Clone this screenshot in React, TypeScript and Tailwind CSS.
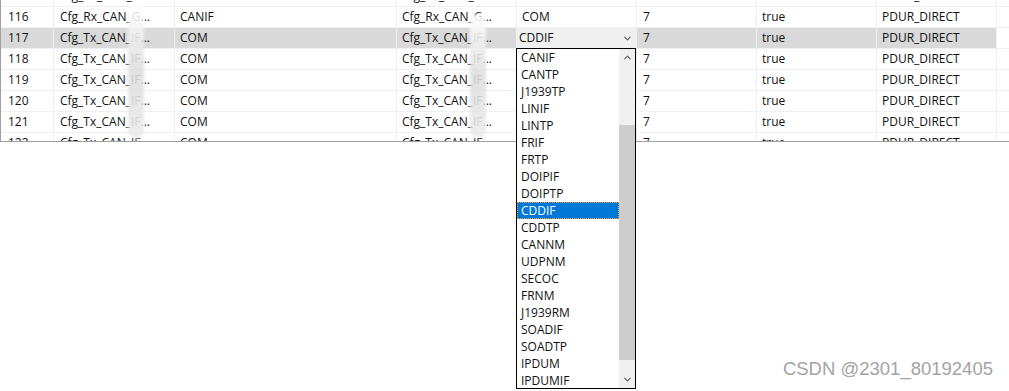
import { ChevronDown, ChevronUp } from 'lucide-react';

type Row = {
  id: string;
  name: string;
  module: string;
  path: string;
  target: string;
  hi?: boolean;
  combo?: boolean;
};

const rx = 'Cfg_Rx_CAN_G...';
const tx = 'Cfg_Tx_CAN_IF...';

// rows 118+ have their target cell hidden under the open list
const rows: Row[] = [
  { id: '115', name: rx, module: 'CANIF', path: rx, target: 'COM' },
  { id: '116', name: rx, module: 'CANIF', path: rx, target: 'COM' },
  { id: '117', name: tx, module: 'COM', path: tx, target: 'CDDIF', hi: true, combo: true },
  { id: '118', name: tx, module: 'COM', path: tx, target: '' },
  { id: '119', name: tx, module: 'COM', path: tx, target: '' },
  { id: '120', name: tx, module: 'COM', path: tx, target: '' },
  { id: '121', name: tx, module: 'COM', path: tx, target: '' },
  { id: '122', name: tx, module: 'COM', path: tx, target: '' },
];

const options = [
  'CANIF', 'CANTP', 'J1939TP', 'LINIF', 'LINTP', 'FRIF', 'FRTP', 'DOIPIF', 'DOIPTP', 'CDDIF',
  'CDDTP', 'CANNM', 'UDPNM', 'SECOC', 'FRNM', 'J1939RM', 'SOADIF', 'SOADTP', 'IPDUM', 'IPDUMIF',
];

function Cell({ w, children, pad = 'pl-[6px]' }: { w: string; children?: React.ReactNode; pad?: string }) {
  return (
    <div className={`${w} ${pad} flex h-full items-center overflow-hidden whitespace-nowrap border-r border-[#eef0f3]`}>
      {children}
    </div>
  );
}

export default function App() {
  return (
    <div className="relative h-[391px] w-[1009px] overflow-hidden bg-white font-['Open_Sans',sans-serif] text-[12px] text-[#111]">
      {/* table, scrolled so that row 115 is cut at the top */}
      <div className="relative h-[142px] overflow-hidden border-b border-l border-[#a0a0a0]">
        <div className="-mt-[14px]">
          {rows.map((r) => (
            <div key={r.id} className="flex h-[21px] border-b border-[#eef0f3]">
              <div className={`flex ${r.hi ? 'bg-[#d9d9d9]' : ''}`}>
                <Cell w="w-[53px]" pad="pl-[7px]">{r.id}</Cell>
                <Cell w="w-[121px]">{r.name}</Cell>
                <Cell w="w-[222px]" pad="pl-[5px]">{r.module}</Cell>
                <Cell w="w-[120px]" pad="pl-[5px]">{r.path}</Cell>
                {r.combo ? (
                  <div className="flex h-full w-[120px] items-center border-r border-[#eef0f3] bg-[#f0f0f0]">
                    <span className="flex-1 pl-[2px]">{r.target}</span>
                    <span className="flex w-[17px] items-center justify-center">
                      <ChevronDown size={11} strokeWidth={2.5} className="text-[#606060]" />
                    </span>
                  </div>
                ) : (
                  <Cell w="w-[120px]" pad="pl-[5px]">{r.target}</Cell>
                )}
                <Cell w="w-[120px]">7</Cell>
                <Cell w="w-[120px]" pad="pl-[5px]">true</Cell>
                <Cell w="w-[120px]" pad="pl-[5px]">PDUR_DIRECT</Cell>
              </div>
            </div>
          ))}
        </div>

        {/* redaction blurs */}
        <div className="absolute left-[127px] top-[3px] h-[136px] w-[16px] rounded-full bg-gradient-to-b from-white via-[#dedede] to-[#ececec] opacity-90 blur-[1.5px]" />
        <div className="absolute left-[469px] top-[14px] h-[124px] w-[16px] rounded-full bg-gradient-to-b from-white via-[#dedede] to-[#ececec] opacity-90 blur-[1.5px]" />
      </div>

      {/* open dropdown list */}
      <div className="absolute left-[516px] top-[48px] flex h-[341px] w-[120px] overflow-hidden border border-black bg-white">
        <div className="flex-1">
          {options.map((o) => (
            <div
              key={o}
              className={`h-[17px] pl-[4px] leading-[17px] ${
                o === 'CDDIF'
                  ? 'bg-[#0078d7] text-white outline-1 -outline-offset-1 outline-dotted outline-[#f5a13a]'
                  : ''
              }`}
            >
              {o}
            </div>
          ))}
        </div>
        <div className="flex w-[16px] flex-col bg-[#f0f0f0]">
          <div className="flex h-[17px] items-center justify-center">
            <ChevronUp size={11} strokeWidth={2.5} className="text-[#606060]" />
          </div>
          <div className="h-[59px]" />
          <div className="h-[235px] bg-[#cdcdcd]" />
          <div className="flex-1" />
          <div className="flex h-[17px] items-center justify-center">
            <ChevronDown size={11} strokeWidth={2.5} className="text-[#606060]" />
          </div>
        </div>
      </div>

      {/* watermark */}
      <div className="absolute bottom-[8px] right-[16px] font-['Liberation_Sans',sans-serif] text-[18.5px] text-[#a3a3a3]">
        CSDN @2301_80192405
      </div>
    </div>
  );
}
